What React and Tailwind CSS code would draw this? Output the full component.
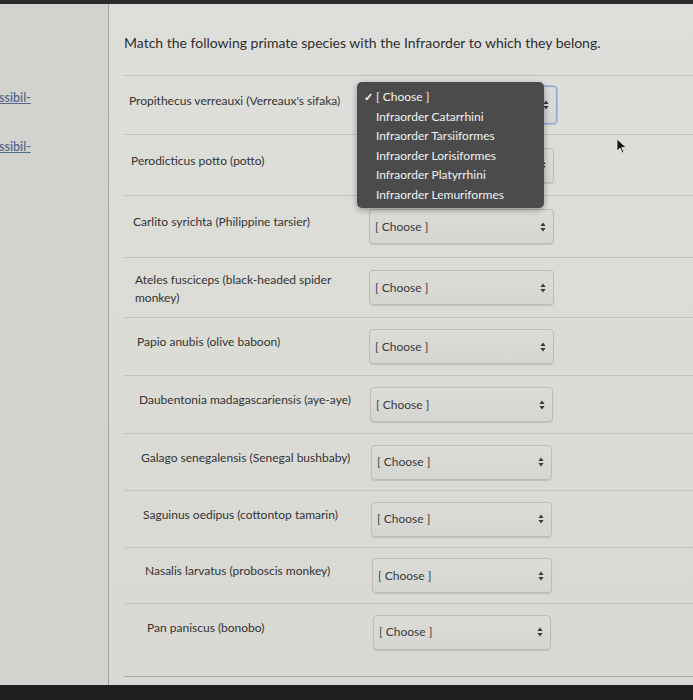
const rows = [
  { label: "Propithecus verreauxi (Verreaux's sifaka)", h: "h-[59px]", pl: "pl-[5px]", sel: "ml-[14px] w-[196px]", focus: true },
  { label: "Perodicticus potto (potto)", h: "h-[61px]", pl: "pl-[7px]", sel: "ml-[14px] w-[191px]" },
  { label: "Carlito syrichta (Philippine tarsier)", h: "h-[62px]", pl: "pl-[9px]", sel: "ml-[18px] w-[185px]" },
  { label: "Ateles fusciceps (black-headed spider monkey)", h: "h-[60px]", pl: "pl-[11px]", sel: "ml-[16px] w-[185px]", lab: "mt-[3px]" },
  { label: "Papio anubis (olive baboon)", h: "h-[58px]", pl: "pl-[13px]", sel: "ml-[14px] w-[185px]" },
  { label: "Daubentonia madagascariensis (aye-aye)", h: "h-[58px]", pl: "pl-[15px]", sel: "ml-[13px] w-[183px]" },
  { label: "Galago senegalensis (Senegal bushbaby)", h: "h-[57px]", pl: "pl-[17px]", sel: "ml-[12px] w-[181px]" },
  { label: "Saguinus oedipus (cottontop tamarin)", h: "h-[57px]", pl: "pl-[19px]", sel: "ml-[10px] w-[181px]" },
  { label: "Nasalis larvatus (proboscis monkey)", h: "h-[56px]", pl: "pl-[21px]", sel: "ml-[9px] w-[180px]" },
  { label: "Pan paniscus (bonobo)", h: "h-[56px]", pl: "pl-[23px]", sel: "ml-[8px] w-[178px]", last: true },
];

const options = [
  "Infraorder Catarrhini",
  "Infraorder Tarsiiformes",
  "Infraorder Lorisiformes",
  "Infraorder Platyrrhini",
  "Infraorder Lemuriformes",
];

function Arrows() {
  return (
    <svg width="6" height="10" viewBox="0 0 6 10" className="shrink-0">
      <path d="M3 0.5 L5.6 4 H0.4 Z" fill="#3a3a3a" />
      <path d="M3 9.5 L5.6 6 H0.4 Z" fill="#3a3a3a" />
    </svg>
  );
}

function Select({ focus, className }) {
  return (
    <div
      className={`flex h-[35px] shrink-0 items-center justify-between rounded-[4px] border bg-gradient-to-b from-[#dcdcd9] to-[#d5d5d2] pl-[5px] pr-[7px] text-[12px] text-[#3b3b3b] shadow-[0_1px_1px_rgba(0,0,0,0.12)] ${
        focus ? "h-[38px] border-[#8da6d2] ring-1 ring-[#a9bde0]" : "border-[#bcbcb8]"
      } ${className}`}
    >
      <span>[ Choose ]</span>
      <Arrows />
    </div>
  );
}

export default function App() {
  return (
    <div className="relative h-[700px] w-[693px] overflow-hidden bg-[#d4d4d0] font-['Lato',sans-serif] text-[#2d2d2d]">
      <div className="h-[4px] bg-[#2b2b2b]" />
      <div className="flex h-[681px]">
        <div className="flex w-[108px] shrink-0 flex-col bg-[#d2d2ce] pt-[85px] text-[12.5px] font-semibold text-[#56698d]">
          <span className="-ml-[1px] underline">ssibil-</span>
          <span className="-ml-[1px] mt-[30px] underline">ssibil-</span>
        </div>
        <div className="flex-1 border-l border-[#a4a4a0] bg-gradient-to-b from-[#dededa] via-[#dcdcd7] to-[#d9d8d4]">
          <div className="pl-[15px] pt-[28px] text-[14px] text-[#2f2f2f]">
            Match the following primate species with the Infraorder to which they belong.
          </div>
          <div className="ml-[15px] mt-[22px] border-t border-[#c2c2be]">
            {rows.map((r) => (
              <div
                key={r.label}
                className={`flex items-center ${r.h} ${r.last ? "" : "border-b border-[#c4c4c0]"} ${r.pl}`}
              >
                <div className={`w-[218px] shrink-0 text-[12px] leading-[18px] text-[#333] ${r.lab || "-mt-[9px]"}`}>
                  {r.label}
                </div>
                <Select focus={r.focus} className={r.sel} />
              </div>
            ))}
          </div>
          <div className="ml-[15px] mt-[16px] border-t border-[#a8a8a4]" />
        </div>
      </div>
      <div className="h-[15px] bg-[#1e1e1e]" />

      {/* open dropdown menu */}
      <div className="absolute left-[357px] top-[82px] w-[187px] rounded-[5px] bg-[#4b4b4b] pb-[4px] pt-[5px] text-[12px] leading-[19.5px] text-[#f2f2f2] shadow-[0_2px_6px_rgba(0,0,0,0.35)]">
        <div className="flex items-center pl-[7px]">
          <span className="w-[12px] text-[11px] font-bold">✓</span>
          <span>[ Choose ]</span>
        </div>
        {options.map((o) => (
          <div key={o} className="pl-[19px]">
            {o}
          </div>
        ))}
      </div>

      {/* mouse pointer */}
      <svg className="absolute left-[615px] top-[138px]" width="12" height="16" viewBox="0 0 12 16">
        <path d="M2 1 L2 13 L5 10 L7.5 15 L9 14.3 L6.7 9.5 L11 9.5 Z" fill="#151515" stroke="#f0f0f0" strokeWidth="0.7" />
      </svg>
    </div>
  );
}
